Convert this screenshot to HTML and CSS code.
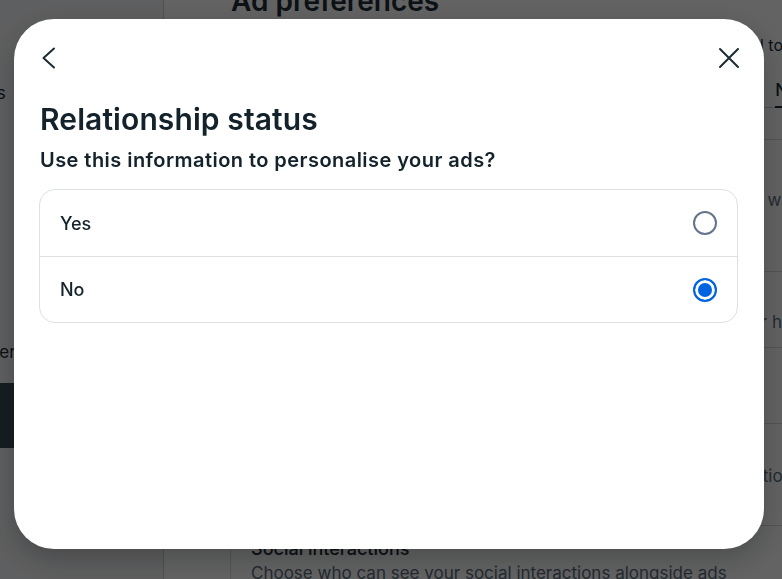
FILE: index.html
```html
<!DOCTYPE html>
<html>
<head>
    <title>Ad preferences - Relationship status</title>
    <link rel="stylesheet" href="styles.css">
</head>
<body>
    <div class="page">
        <aside class="sidebar">
            <div class="sidebar-inner">
                <div class="nav-item nav-first">Ad topics</div>
                <div class="nav-item nav-second">Ad partner</div>
                <div class="nav-button">Manage</div>
            </div>
        </aside>

        <main class="main">
            <h1 class="page-title">Ad preferences</h1>
            <p class="page-desc">Manage the info used to show you ads and accounts linked to</p>
            <div class="tabs">
                <span class="tab">Customise ads</span>
                <span class="tab tab-active">Notifications</span>
            </div>
            <div class="info-card">
                <div class="info-row row-tall">
                    <span class="row-desc">Choose which profile information can be used to show you ads in other places</span>
                </div>
                <div class="info-row">
                    <span class="row-desc">Show or hide ads about categories you have been put into</span>
                </div>
                <div class="info-row"></div>
                <div class="info-row row-last">
                    <span class="row-desc">Information about activity from ad partners and how it shows posts</span>
                </div>
            </div>
            <div class="section">
                <h3 class="section-title">Social interactions</h3>
                <p class="section-desc">Choose who can see your social interactions alongside ads</p>
            </div>
        </main>
    </div>

    <div class="backdrop"></div>

    <div class="dialog">
        <div class="dialog-head">
            <button class="icon-btn back-btn" aria-label="Back">
                <svg width="24" height="24" viewBox="0 0 24 24"><path d="M17 2.5 L6.5 12 L17 21.5" fill="none" stroke="#1c2b33" stroke-width="2" stroke-linecap="round" stroke-linejoin="round"/></svg>
            </button>
            <button class="icon-btn close-btn" aria-label="Close">
                <svg width="24" height="24" viewBox="0 0 24 24"><path d="M3 3 L21 21 M21 3 L3 21" fill="none" stroke="#1c2b33" stroke-width="2" stroke-linecap="round"/></svg>
            </button>
        </div>

        <h2 class="dialog-title">Relationship status</h2>
        <p class="dialog-question">Use this information to personalise your ads?</p>

        <div class="choice-list">
            <label class="choice">
                <span>Yes</span>
                <span class="radio"></span>
            </label>
            <label class="choice">
                <span>No</span>
                <span class="radio radio-on"></span>
            </label>
        </div>
    </div>
</body>
</html>
```
FILE: styles.css
```css
* {
    margin: 0;
    padding: 0;
    box-sizing: border-box;
}

body {
    font-family: Inter, "Noto Sans", sans-serif;
    color: #1c2b33;
    background-color: #f7f8fa;
    overflow: hidden;
    height: 579px;
}

.page {
    display: flex;
    height: 100%;
}

.sidebar {
    width: 164px;
    flex-shrink: 0;
    background-color: #eceef0;
    border-right: 1px solid #c5c9ce;
    overflow: hidden;
}

.sidebar-inner {
    margin-left: -70px;
    width: 234px;
}

.nav-item {
    font-size: 17px;
    line-height: 22px;
    white-space: nowrap;
}

.nav-first {
    margin-top: 82px;
}

.nav-second {
    margin-top: 237px;
}

.nav-button {
    margin-top: 20px;
    height: 65px;
    background-color: #384a55;
    color: white;
    border-radius: 8px;
    padding: 20px 0;
}

.main {
    flex: 1;
    padding-left: 67px;
    white-space: nowrap;
}

.page-title {
    font-size: 28px;
    font-weight: 600;
    line-height: 34px;
    margin-top: -16px;
}

.page-desc {
    font-size: 16px;
    line-height: 20px;
    margin-top: 17px;
    width: 552px;
    text-align: right;
}

.tabs {
    display: flex;
    gap: 24px;
    margin-top: 20px;
    border-bottom: 1px solid #c5c9ce;
    height: 33px;
}

.tab {
    font-size: 17px;
    font-weight: 500;
    padding-top: 5px;
}

.tab-active {
    margin-left: 400px;
    border-bottom: 2px solid #1c2b33;
    margin-bottom: -1px;
}

.info-card {
    margin-top: 31px;
    border-left: 1px solid #d4d8dc;
    margin-left: -1px;
}

.info-row {
    height: 76px;
    border-bottom: 1px solid #cfd3d8;
    padding-top: 40px;
    padding-left: 250px;
}

.row-tall {
    height: 133px;
    padding-top: 50px;
    border-top: 1px solid #cfd3d8;
}

.row-last {
    height: 102px;
    padding-top: 42px;
}

.row-desc {
    font-size: 17px;
    color: #5b6b78;
    margin-left: 220px;
}

.section {
    border-left: 1px solid #d4d8dc;
    margin-left: -1px;
    padding-left: 20px;
    padding-top: 12px;
}

.section-title {
    font-size: 18px;
    font-weight: 500;
    line-height: 22px;
}

.section-desc {
    font-size: 17px;
    color: #5b6b78;
    margin-top: 3px;
}

.backdrop {
    position: fixed;
    inset: 0;
    background-color: rgba(0, 0, 0, 0.6);
}

.dialog {
    position: fixed;
    top: 19px;
    left: 14px;
    width: 750px;
    height: 530px;
    background-color: white;
    border-radius: 40px;
    box-shadow: 0 10px 30px rgba(0, 0, 0, 0.25);
    padding: 0 26px;
}

.dialog-head {
    display: flex;
    justify-content: space-between;
    align-items: center;
    padding-top: 27px;
}

.icon-btn {
    display: block;
    background: none;
    border: none;
    width: 24px;
    height: 24px;
    cursor: pointer;
}

.icon-btn svg {
    display: block;
}

.back-btn {
    margin-left: -3px;
}

.close-btn {
    margin-right: -3px;
}

.dialog-title {
    font-size: 30px;
    font-weight: 600;
    line-height: 36px;
    margin-top: 31px;
    letter-spacing: 0.1px;
    color: #14222b;
}

.dialog-question {
    font-size: 20px;
    font-weight: 600;
    line-height: 24px;
    margin-top: 11px;
    letter-spacing: 0.45px;
    color: #14222b;
}

.choice-list {
    margin-top: 17px;
    margin-left: -1px;
    border: 1px solid #dde1e6;
    border-radius: 16px;
}

.choice {
    display: flex;
    justify-content: space-between;
    align-items: center;
    height: 66px;
    padding: 0 20px;
    font-size: 18px;
    font-weight: 500;
    color: #14222b;
    cursor: pointer;
}

.choice + .choice {
    border-top: 1px solid #dde1e6;
}

.radio {
    width: 24px;
    height: 24px;
    border: 2px solid #64748a;
    border-radius: 50%;
}

.radio-on {
    border-color: #0064e0;
    background-color: #0064e0;
    box-shadow: inset 0 0 0 3px white;
}
```
